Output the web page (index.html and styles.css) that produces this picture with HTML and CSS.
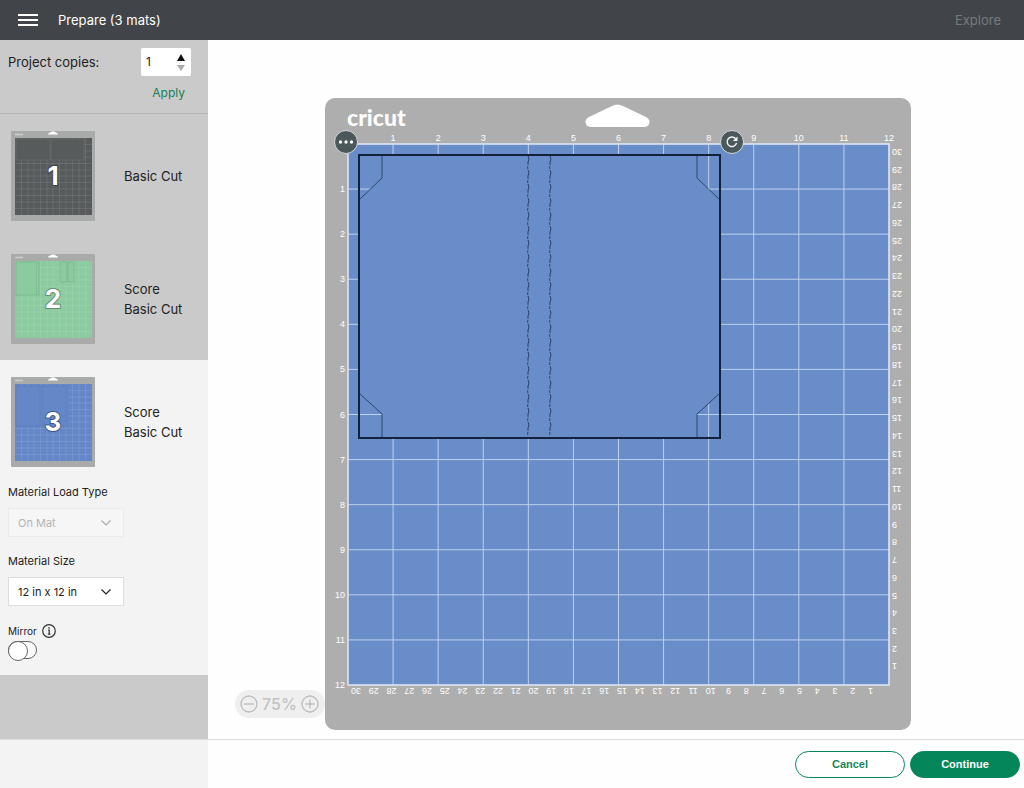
FILE: index.html
```html
<!DOCTYPE html>
<html lang="en">
<head>
<meta charset="utf-8">
<meta name="viewport" content="width=device-width, initial-scale=1">
<title>Prepare (3 mats)</title>
<link rel="stylesheet" href="styles.css">
</head>
<body>
<header class="topbar">
  <button class="menu" type="button" aria-label="Menu"><svg width="20" height="14" viewBox="0 0 20 14"><path d="M0 2h20M0 7h20M0 12h20"/></svg></button>
  <h1 class="title">Prepare (3 mats)</h1>
  <a class="explore" href="#">Explore</a>
</header>

<div class="workspace">
  <aside class="sidebar">
    <form class="copies">
      <div class="copies-row">
        <label for="copies">Project copies:</label>
        <div class="stepper">
          <input id="copies" type="number" value="1" min="1">
          <div class="arrows">
            <button type="button" aria-label="Increase"><svg width="8" height="7" viewBox="0 0 8 7"><path d="M4 0l4 7H0z" fill="#111"/></svg></button>
            <button type="button" aria-label="Decrease"><svg width="8" height="6" viewBox="0 0 8 6"><path d="M0 0h8L4 6z" fill="#aaa"/></svg></button>
          </div>
        </div>
      </div>
      <button class="apply" type="button">Apply</button>
    </form>

    <section class="mat-item">
      <svg class="thumb" viewBox="0 0 84 90" role="img" aria-label="Mat 1">
        <rect width="84" height="90" rx="1" fill="#a9abab"/>
        <path d="M4 3.500h8" stroke="#ccc" stroke-width="1.500"/>
        <path d="M37 3.500c0-1 3-3 5-3s5 2 5 3z" fill="#fff"/>
        <rect x="4" y="7" width="77" height="77" fill="#575b5b"/>
        <path class="thumb-grid" d="M10.500 7v77M17 7v77M23 7v77M29.500 7v77M36 7v77M42 7v77M48.500 7v77M55 7v77M61.500 7v77M68 7v77M74.500 7v77M4 13.500h77M4 20h77M4 26h77M4 32.500h77M4 39h77M4 45h77M4 51.500h77M4 58h77M4 64.500h77M4 71h77M4 77.500h77"/>
        <path d="M5 8h34v21H5zM40 8h33v21H40z" fill="#575b5b" stroke="#6c7271" stroke-width=".6"/>
        <text class="thumb-number" x="42" y="54" stroke="#444">1</text>
      </svg>
      <p>Basic Cut</p>
    </section>

    <section class="mat-item">
      <svg class="thumb" viewBox="0 0 84 90" role="img" aria-label="Mat 2">
        <rect width="84" height="90" rx="1" fill="#a9abab"/>
        <path d="M4 3.500h8" stroke="#ccc" stroke-width="1.500"/>
        <path d="M37 3.500c0-1 3-3 5-3s5 2 5 3z" fill="#fff"/>
        <rect x="4" y="7" width="77" height="77" fill="#8ccb9f"/>
        <path class="thumb-grid" d="M10.500 7v77M17 7v77M23 7v77M29.500 7v77M36 7v77M42 7v77M48.500 7v77M55 7v77M61.500 7v77M68 7v77M74.500 7v77M4 13.500h77M4 20h77M4 26h77M4 32.500h77M4 39h77M4 45h77M4 51.500h77M4 58h77M4 64.500h77M4 71h77M4 77.500h77"/>
        <path d="M5 8h23v33H5zM49 8h7v20h-7zM57 8h6v20h-6z" fill="#8ccb9f" stroke="#78b58b" stroke-width=".7"/>
        <path d="M25.500 8v33" stroke="#78b58b" stroke-width=".6"/>
        <text class="thumb-number" x="42" y="54" stroke="#648b70">2</text>
      </svg>
      <p>Score<br>Basic Cut</p>
    </section>

    <section class="mat-item selected">
      <svg class="thumb" viewBox="0 0 84 90" role="img" aria-label="Mat 3">
        <rect width="84" height="90" rx="1" fill="#a9abab"/>
        <path d="M4 3.500h8" stroke="#ccc" stroke-width="1.500"/>
        <path d="M37 3.500c0-1 3-3 5-3s5 2 5 3z" fill="#fff"/>
        <rect x="4" y="7" width="77" height="77" fill="#6488c7"/>
        <path class="thumb-grid" d="M10.500 7v77M17 7v77M23 7v77M29.500 7v77M36 7v77M42 7v77M48.500 7v77M55 7v77M61.500 7v77M68 7v77M74.500 7v77M4 13.500h77M4 20h77M4 26h77M4 32.500h77M4 39h77M4 45h77M4 51.500h77M4 58h77M4 64.500h77M4 71h77M4 77.500h77"/>
        <path d="M5 9h51v40H5z" fill="#6488c7" stroke="#597bb8" stroke-width=".7"/>
        <path d="M29 9v40M32 9v40" stroke="#5b7dba" stroke-width=".7"/>
        <text class="thumb-number" x="42" y="54" stroke="#3f5788">3</text>
      </svg>
      <p>Score<br>Basic Cut</p>
    </section>

    <form class="settings">
      <label class="field-label" for="load">Material Load Type</label>
      <div class="select disabled"><select id="load" disabled><option>On Mat</option></select><svg viewBox="0 0 10 6"><path d="M.5 .5L5 5 9.500 .5"/></svg></div>
      <label class="field-label" for="size">Material Size</label>
      <div class="select"><select id="size"><option>12 in x 12 in</option></select><svg viewBox="0 0 10 6"><path d="M.5 .5L5 5 9.500 .5"/></svg></div>
      <div class="mirror-row">
        <label for="mirror">Mirror</label>
        <button type="button" aria-label="About mirror"><svg width="14" height="14" viewBox="0 0 14 14"><circle cx="7" cy="7" r="6.300"/><path d="M6 6h1.200v4.200M5.800 10.200h2.600"/><circle cx="7" cy="3.800" r=".3"/></svg></button>
      </div>
      <input class="toggle" id="mirror" type="checkbox">
    </form>
  </aside>

  <main class="stage">
    <div class="zoom">
      <button type="button" aria-label="Zoom out"><svg width="18" height="18" viewBox="0 0 18 18"><circle cx="9" cy="9" r="8"/><path d="M4 9h10"/></svg></button>
      <output>75%</output>
      <button type="button" aria-label="Zoom in"><svg width="18" height="18" viewBox="0 0 18 18"><circle cx="9" cy="9" r="8"/><path d="M4.500 9h9M9 4.500v9"/></svg></button>
    </div>
    <div class="mat">
      <svg class="mat-drawing" viewBox="0 0 586 632" role="img" aria-label="Cricut mat, 12 by 12 inches">
        <rect width="586" height="632" rx="10" fill="#aeaeae"/>
        <text class="brand" x="22" y="28">cricut</text>
        <path d="M287 8q5.500-3 11 0l23 11q5 3 3 7-1 3-5 3h-53q-4 0-5-3-2-4 3-7z" fill="#fff"/>
        <rect x="23" y="46" width="541" height="541" fill="#698dc8"/>
        <g id="grid"></g>
        <path d="M57 57h315v23l22 22v193l-22 21v23H57v-23l-22-21V102l22-22z" fill="#698dc8"/>
        <path d="M57 57v23L34 102M372 57v23l23 22M34 295l23 21v23M395 295l-23 21v23" fill="none" stroke="#2d4570" stroke-width="1"/>
        <g id="score" fill="none" stroke="#2b4068" stroke-width="1"></g>
        <rect x="34" y="57" width="361" height="283" fill="none" stroke="#13223c" stroke-width="2"/>
        <g id="inches" class="ruler"></g>
        <g id="centimetres" class="ruler"></g>
      </svg>
      <button class="handle more" type="button" aria-label="More options"><svg viewBox="0 0 24 24"><circle cx="6" cy="12" r="1.800"/><circle cx="12" cy="12" r="1.800"/><circle cx="18" cy="12" r="1.800"/></svg></button>
      <button class="handle rotate" type="button" aria-label="Rotate"><svg viewBox="0 0 24 24"><path d="M16 8.500A5.200 5.200 0 1 0 17 13" fill="none" stroke="#eef1f2" stroke-width="1.600"/><path d="M18 6v5h-5z"/></svg></button>
    </div>
  </main>
</div>

<footer class="footer">
  <div class="footer-side"></div>
  <div class="actions">
    <button class="cancel" type="button">Cancel</button>
    <button class="continue" type="button">Continue</button>
  </div>
</footer>
<script src="mat.js"></script>
</body>
</html>
```
FILE: styles.css
```css
* { box-sizing: border-box; }
body {
  margin: 0;
  min-height: 100vh;
  display: flex;
  flex-direction: column;
  font-family: Inter, "Liberation Sans", sans-serif;
  font-size: 13px;
  line-height: 20px;
  color: #222;
  background: #fefefe;
}
button, input, select { font: inherit; color: inherit; }
button { border: 0; padding: 0; background: none; cursor: pointer; }
svg { display: block; }
p { margin: 0; }

.topbar {
  display: flex;
  align-items: center;
  height: 40px;
  padding: 0 23px 0 18px;
  background: #414549;
  color: #fff;
}
.menu svg { fill: none; stroke: #fff; stroke-width: 2; }
.title { margin: 0 0 0 20px; font-size: 13px; font-weight: 400; }
.explore { margin-left: auto; color: #76797c; text-decoration: none; }

.workspace { flex: 1; display: flex; }
.sidebar { width: 208px; flex: none; background: #cacaca; }
.copies { height: 74px; padding: 8px 17px 0 8px; border-bottom: 1px solid #b4b4b4; }
.copies-row { display: flex; justify-content: space-between; align-items: center; }
.stepper { display: flex; width: 50px; height: 28px; background: #fff; border-radius: 2px; }
.stepper input {
  width: 36px;
  padding: 0 0 0 5px;
  border: 0;
  background: none;
  outline: 0;
  font-size: 12px;
  appearance: textfield;
}
.stepper input::-webkit-inner-spin-button { display: none; }
.arrows { display: flex; flex-direction: column; justify-content: center; gap: 4px; }
.apply { display: block; margin: 7px 6px 0 auto; font-size: 12px; color: #158257; }

.mat-item { display: flex; align-items: center; gap: 29px; height: 123px; padding-left: 11px; }
.mat-item.selected { background: #f3f3f3; }
.thumb { width: 84px; height: 90px; flex: none; }
.thumb-grid { stroke: #fff; stroke-opacity: .16; stroke-width: .6; fill: none; }
.thumb-number {
  font: 700 26px Inter, sans-serif;
  text-anchor: middle;
  fill: #fff;
  stroke-width: 2;
  paint-order: stroke;
}

.settings { padding: 0 8px 16px; background: #f3f3f3; }
.field-label { display: block; font-size: 11px; line-height: 18px; }
.select {
  display: grid;
  align-items: center;
  width: 116px;
  height: 29px;
  margin: 7px 0 15px;
  border: 1px solid #ddd;
  background: #fff;
  font-size: 11px;
}
.select select {
  grid-area: 1 / 1;
  appearance: none;
  height: 27px;
  padding: 0 26px 0 9px;
  border: 0;
  background: none;
  opacity: 1;
}
.select svg {
  grid-area: 1 / 1;
  justify-self: end;
  width: 10px;
  height: 6px;
  margin-right: 12px;
  fill: none;
  stroke: #222;
  stroke-width: 1.2;
  pointer-events: none;
}
.select.disabled { color: #b4b4b4; border-color: #ebebeb; background: #f6f6f6; }
.select.disabled svg { stroke: #aaa; }
.mirror-row { display: flex; align-items: center; gap: 5px; font-size: 10px; }
.mirror-row svg { fill: none; stroke: #333; stroke-width: 1.2; }
.toggle {
  appearance: none;
  display: block;
  width: 29px;
  height: 18px;
  margin: 0;
  border: 1px solid #666;
  border-radius: 9px;
  background: #fafafa;
}
.toggle::before {
  content: "";
  display: block;
  width: 18px;
  height: 18px;
  margin: -1px;
  border: 1px solid #666;
  border-radius: 50%;
  background: #fff;
}

.stage {
  flex: 1;
  min-width: 0;
  display: grid;
  grid-template-columns: 1fr minmax(0, 586px) 1fr;
  align-items: end;
  padding: 58px 0 9px 3px;
}
.zoom {
  justify-self: end;
  display: flex;
  align-items: center;
  justify-content: space-between;
  width: 90px;
  height: 28px;
  margin-bottom: 12px;
  padding: 0 5px;
  border-radius: 14px;
  background: #efefef;
  color: #c2c2c2;
  font-size: 16px;
  font-weight: 500;
}
.zoom svg { fill: none; stroke: #bcbcbc; stroke-width: 1.3; }
.mat { position: relative; }
.mat-drawing { width: 100%; height: auto; }
.brand { font: 900 23px Lato, sans-serif; fill: #fff; }
.ruler { font: 9px "Liberation Sans", sans-serif; fill: #fff; text-anchor: middle; }
.grid-line { stroke: #bdd0ee; stroke-width: 1; fill: none; }
.grid-edge { stroke: #dce6f4; stroke-width: 1.6; fill: none; }
.handle {
  position: absolute;
  top: 32px;
  width: 24px;
  height: 24px;
  border: 1px solid #d5dbdf;
  border-radius: 50%;
  background: #4a575b;
}
.handle svg { width: 22px; height: 22px; fill: #fff; }
.more { left: 9px; }
.rotate { left: 395px; }

.footer { display: flex; height: 49px; border-top: 1px solid #dedede; }
.footer-side { width: 208px; background: #f3f3f3; }
.actions { flex: 1; display: flex; justify-content: flex-end; align-items: center; gap: 5px; padding-right: 4px; }
.actions button {
  width: 110px;
  height: 27px;
  border: 1px solid #05865a;
  border-radius: 14px;
  font-family: "Liberation Sans", sans-serif;
  font-size: 11px;
  font-weight: 700;
}
.cancel { background: #fff; color: #15865b; }
.actions .continue { background: #05865a; color: #fff; }
```
FILE: mat.js
```js
const NS = "http://www.w3.org/2000/svg";
const left = 23, top_ = 46, size = 541, inch = size / 12;

function add(parent, tag, attrs, text) {
  const el = document.createElementNS(NS, tag);
  for (const key in attrs) el.setAttribute(key, attrs[key]);
  if (text !== undefined) el.textContent = text;
  document.getElementById(parent).append(el);
}

// Inch grid and its rulers along the top and left edges.
let lines = "";
for (let i = 1; i < 12; i++) {
  lines += `M${left + i * inch} ${top_}v${size}M${left} ${top_ + i * inch}h${size}`;
}
add("grid", "path", { class: "grid-line", d: lines });
add("grid", "rect", { class: "grid-edge", x: left, y: top_, width: size, height: size });
for (let i = 1; i <= 12; i++) {
  add("inches", "text", { x: left + i * inch, y: 43 }, i);
  add("inches", "text", { x: 20, y: top_ + i * inch + 3, style: "text-anchor:end" }, i);
}

// Centimetre rulers read from the opposite corner, so they are upside down.
const cm = 17.74;
for (let n = 1; n <= 30; n++) {
  const x = 31 + (30 - n) * cm, y = 51 + (30 - n) * cm;
  add("centimetres", "text", { transform: `translate(${x} 590) rotate(180)` }, n);
  add("centimetres", "text", { transform: `translate(567 ${y}) rotate(180)`, style: "text-anchor:end" }, n);
}

// Wavy score lines at the spine of the cover.
for (const x of [203, 225]) {
  let d = "";
  for (let y = 58; y < 330; y += 14) {
    d += `M${x} ${y}q2 3 0 6v3M${x} ${y + 10}q-1 2 0 3`;
  }
  add("score", "path", { d });
}
```
